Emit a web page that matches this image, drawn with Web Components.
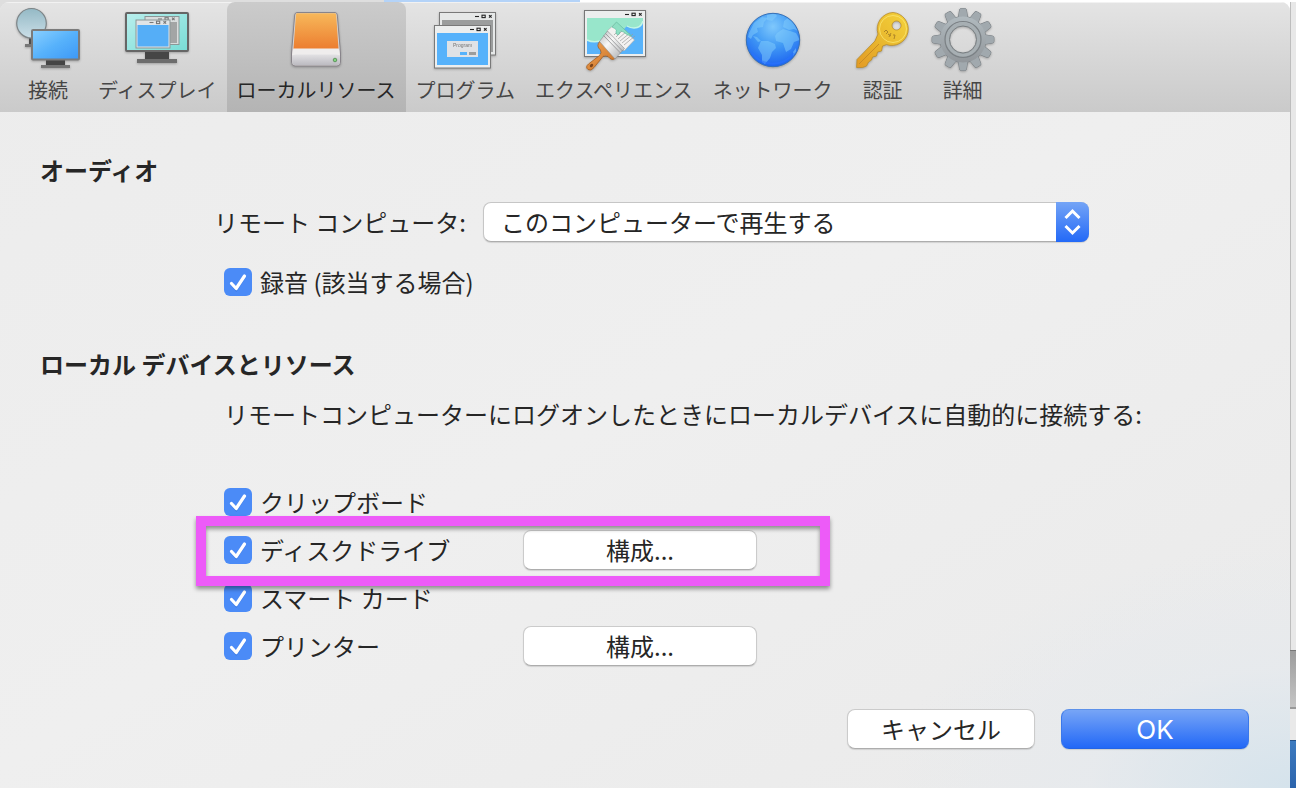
<!DOCTYPE html>
<html lang="ja">
<head>
<meta charset="utf-8">
<title>ローカルリソース</title>
<style>
body{margin:0;font-family:"Noto Sans CJK JP","Liberation Sans",sans-serif;font-size:24px;line-height:32px;color:#262626}
</style>
</head>
<body>
<desktop-view>
  <settings-window>
    <settings-toolbar slot="toolbar">
      <toolbar-item icon="connect">接続</toolbar-item>
      <toolbar-item icon="display">ディスプレイ</toolbar-item>
      <toolbar-item icon="disk" selected>ローカルリソース</toolbar-item>
      <toolbar-item icon="program">プログラム</toolbar-item>
      <toolbar-item icon="brush">エクスペリエンス</toolbar-item>
      <toolbar-item icon="globe">ネットワーク</toolbar-item>
      <toolbar-item icon="key">認証</toolbar-item>
      <toolbar-item icon="gear">詳細</toolbar-item>
    </settings-toolbar>
    <settings-section heading="オーディオ">
      <popup-field label="リモート コンピュータ:" value="このコンピューターで再生する"></popup-field>
      <check-row>録音 (該当する場合)</check-row>
    </settings-section>
    <settings-section heading="ローカル デバイスとリソース">
      <section-note>リモートコンピューターにログオンしたときにローカルデバイスに自動的に接続する:</section-note>
      <check-row>クリップボード</check-row>
      <check-row>ディスクドライブ<push-button slot="action">構成...</push-button><highlight-frame slot="mark"></highlight-frame></check-row>
      <check-row>スマート カード</check-row>
      <check-row>プリンター<push-button slot="action">構成...</push-button></check-row>
    </settings-section>
    <push-button slot="footer">キャンセル</push-button>
    <push-button slot="footer" primary>OK</push-button>
  </settings-window>
</desktop-view>

<script>
const define = (name, html, setup) => {
  const template = document.createElement('template');
  template.innerHTML = html;
  customElements.define(name, class extends HTMLElement {
    constructor() {
      super();
      this.attachShadow({ mode: 'open' }).append(template.content.cloneNode(true));
    }
    connectedCallback() { if (setup) setup(this, this.shadowRoot); }
  });
};

const winButtons = (x, y, c) => `<g fill="none" stroke="${c}" stroke-width="1.1"><path d="M${x} ${y}h4"/><rect x="${x + 7}" y="${y - 1.3}" width="3.2" height="2.4"/><path d="M${x + 14} ${y - 1.4}l2.6 2.6m0-2.6l-2.6 2.6"/></g>`;
const teeth = Array.from({ length: 12 }, (_, i) => `<path transform="rotate(${i * 30} 32 31.5)" d="M27 12L28.6 2Q28.9 .6 30.2 .6h3.6Q35.1 .6 35.4 2L37 12z"/>`).join('');

const icons = {
  connect: `
    <defs><linearGradient id="a" x2="0" y2="1"><stop stop-color="#94b9c5"/><stop offset="1" stop-color="#cbdfe8"/></linearGradient>
    <linearGradient id="b" x2="1" y2="1"><stop stop-color="#8bd0ff"/><stop offset=".5" stop-color="#57b2fb"/><stop offset="1" stop-color="#3c97f6"/></linearGradient></defs>
    <path fill="#4c4c4c" d="M13 29h4v8h-4z"/><path fill="#777" d="M9 36h8v3H9z"/>
    <circle cx="15.5" cy="15.3" r="14.8" fill="url(#a)" stroke="#7d8487" stroke-width="1.2"/>
    <path fill="#444" d="M30 52h19v6H30z"/><path fill="#747474" d="M25 57h29v3H25z"/>
    <rect x="16" y="22" width="47" height="29.5" rx="1" fill="url(#b)" stroke="#7b7b7b" stroke-width="2"/>`,
  display: `
    <defs><linearGradient id="a" x2="1" y2="1"><stop stop-color="#b9efed"/><stop offset="1" stop-color="#78dcd5"/></linearGradient></defs>
    <path fill="#464646" d="M20 43h24v9H20z"/><path fill="#6d6d6d" d="M12 51h40v4H12z"/>
    <rect x="1" y="5" width="62" height="38" rx="1" fill="url(#a)" stroke="#666" stroke-width="2"/>
    <rect x="20" y="8.5" width="34" height="28" fill="#d9dddd" stroke="#8b9797"/><path fill="#a3a5a5" d="M22 14h30v21H22z"/>${winButtons(33, 11, '#777')}
    <rect x="11" y="12" width="34" height="28" fill="#e1e4e6" stroke="#8b9797"/><path fill="#55aef7" d="M12.500 17h31v21.500h-31z"/>${winButtons(24.500, 14.500, '#777')}`,
  disk: `
    <defs><linearGradient id="a" x2="0" y2="1"><stop stop-color="#f7b85a"/><stop offset="1" stop-color="#ec7d30"/></linearGradient>
    <linearGradient id="b" x2="0" y2="1"><stop stop-color="#e2e1e4"/><stop offset="1" stop-color="#bcbbc1"/></linearGradient></defs>
    <path d="M13 4.500h38Q53 4.500 53.300 7L56.500 45v9Q56.500 58 53 58H11Q7.500 58 7.500 54v-9L10.700 7Q11 4.500 13 4.500z" fill="#d5d2d2" stroke="#88848a" stroke-width="1"/>
    <path d="M13 5.200h38q1 0 1.200 1.800L54.500 41h-45L11.900 7Q12 5.200 13 5.200z" fill="url(#a)"/>
    <path d="M9.200 40.500h45.600l1.200 7H8z" fill="#efeded"/>
    <path d="M8.200 48.500Q9 46.500 12 46.500h40q3 0 3.800 2v5.200Q55.800 57 53 57H11q-2.800 0-2.800-3.300z" fill="url(#b)"/>
    <circle cx="51" cy="52" r="1.800" fill="#7fd67c" stroke="#50864f" stroke-width=".8"/>`,
  program: `
    <rect x="6.500" y="4.500" width="56" height="42.500" fill="#e6e8e8" stroke="#797979"/><path fill="#9b9d9d" d="M9 12h51v32H9z"/>${winButtons(42, 8.500, '#222')}
    <rect x="1.500" y="17.500" width="56" height="42.500" fill="#eceeee" stroke="#797979"/><path fill="#56b2fb" d="M4 25h51v32H4z"/>${winButtons(37, 21.500, '#222')}
    <path fill="#dfe2e6" d="M14 33h31v16H14z"/><text x="29.500" y="39" text-anchor="middle" font-family="Liberation Sans" font-size="5" fill="#777">Program</text>
    <path fill="#56b2fb" d="M27 44h7v3h-7z"/><path fill="#9b9d9d" d="M36 44h7v3h-7z"/>`,
  brush: `
    <defs><linearGradient id="a" x2="1" y2="1"><stop stop-color="#f1a659"/><stop offset="1" stop-color="#c96f22"/></linearGradient>
    <linearGradient id="b" x2="1" y2="1"><stop stop-color="#b4b7b9"/><stop offset=".4" stop-color="#f8f8f8"/><stop offset="1" stop-color="#a4a6a8"/></linearGradient></defs>
    <rect x="2.500" y="2.500" width="61" height="46" fill="#eceeee" stroke="#777"/>${winButtons(43, 6.500, '#222')}
    <path fill="#58b3fa" d="M5 10h56v36H5z"/>
    <path fill="#98e6cb" d="M5 10h56v2q-1 8-8 8-5 0-8-2l-4 4-18 9q-9 5-18 1z"/><path d="M61 13q-2 7-9 7-4 0-7-2M5 32q6 3 13 1" fill="none" stroke="#c4f6e5" stroke-width="1.500"/>
    <path d="M18 33Q13.500 38 18.500 42q1.500 3-1 5.500L6.500 56q-3.500 3-.5 5.500 3 2 6-2L21 48.500q2.500-2 5 0 4 5 7.500 1.500z" fill="url(#a)" stroke="#a45d20" stroke-width=".8"/>
    <ellipse cx="9.500" cy="57.500" rx="1.400" ry="2" transform="rotate(40 9.500 57.500)" fill="#7d431a"/>
    <path d="M25 23L34.500 14.500 52.500 32 42 43z" fill="#f3f2f1" stroke="#aaa" stroke-width=".6"/>
    <path d="M32 27l6-6m-4 8l8-8m-6 10l9-8m-7 10l10-8m-8 10l11-9m-9 11l11-9" stroke="#9b9b9b" stroke-width=".7"/>
    <path d="M30 19l4.500-5 15 14q-5-1-8-4-3-2-4 0 0 4-3 2-1-2 0-4-2-2-4.500-3z" fill="#8edfc3" stroke="#61bea0" stroke-width=".7"/>
    <path d="M17.500 33.500L25.500 23 42.500 40.500 33 51z" fill="url(#b)" stroke="#8b8d8f" stroke-width=".6"/><path d="M23.500 25.500l17 17.500M21.500 27.500l17 17.500" stroke="#8b8d8f" stroke-width=".8"/>`,
  globe: `
    <defs><radialGradient id="a" cx=".5" cy=".25" r=".8"><stop stop-color="#7fc8fc"/><stop offset=".45" stop-color="#439cf5"/><stop offset="1" stop-color="#175cf0"/></radialGradient>
    <clipPath id="c"><circle cx="32" cy="32" r="26"/></clipPath></defs>
    <circle cx="32" cy="32" r="26.700" fill="url(#a)" stroke="#356fb6" stroke-width="1"/>
    <g clip-path="url(#c)" fill="#83cdfb" fill-opacity=".5">
      <path d="M8 25l5-10 8-6 6 1-4 4-1 5-6 1 1 4-5 3-2 4-3-2z"/><path d="M26 7l8-2 2 3-5 5-5-1z"/>
      <path d="M20 33l7 0 7 3 1 4-4 4-2 6-5 6-3-2 0-7-4-7z"/>
      <path d="M36 25l6-4 7 2 6 2 4 7-6 2-3 7-5 3-3-9-7-2-1-5z"/>
      <path d="M43 13l5-4 7 8 4 7-6-3-5 1-6-3z"/><path d="M12 28l4 1 4 4-3 1z"/><path d="M52 44l3-4 0 4-3 4z"/>
    </g>
    <path d="M11 45a26 26 0 0 0 42 0" fill="none" stroke="#2a73ff" stroke-width="2" opacity=".6"/>`,
  key: `
    <defs><linearGradient id="a" x1="1" x2="0" y2="1"><stop stop-color="#f5d33b"/><stop offset=".5" stop-color="#e9b92f"/><stop offset="1" stop-color="#e39a25"/></linearGradient></defs>
    <path fill-rule="evenodd" fill="url(#a)" stroke="#b98c2a" stroke-width=".8" d="M42 4.500A16.500 16.500 0 1 1 35.500 36.600l-4 1.400-1 5-4 1-1 4-4 1-1 3-3 2-2 4-4 1.500H5.600L6 51.500 24 33l3-7A16.500 16.500 0 0 1 42 4.500zM45.500 13a4.500 4.500 0 1 0 .1 0z"/>
    <circle cx="42" cy="21" r="13.500" fill="none" stroke="#f8e26c" stroke-width=".9"/><path d="M8 56l20-20" stroke="#c98c24" stroke-width="1"/>
    <path d="M33 24l2-2 2 2-2 2m2 0l3 2m0-3l-2 4m4-2l2 0-1 4" fill="none" stroke="#ad8428" stroke-width="1"/>`,
  gear: `
    <defs><linearGradient id="a" gradientUnits="userSpaceOnUse" x1="0" y1="0" x2="0" y2="63"><stop stop-color="#b6c0c5"/><stop offset="1" stop-color="#8c9094"/></linearGradient>
    <mask id="m"><path fill="#fff" d="M0 0h64v64H0z"/><circle cx="32" cy="31.500" r="13.500" fill="#000"/></mask></defs>
    <g mask="url(#m)"><g fill="#777d81" stroke="#777d81" stroke-width="1">${teeth}<circle cx="32" cy="31.500" r="23"/></g><g fill="#a1a9ae">${teeth}<circle cx="32" cy="31.500" r="23" fill="url(#a)"/></g></g>
    <circle cx="32" cy="31.500" r="18" fill="none" stroke="#7b8185" stroke-width="1.200"/><circle cx="32" cy="31.500" r="15.500" fill="none" stroke="#a7afb3" stroke-width="3"/><circle cx="32" cy="31.500" r="13.500" fill="none" stroke="#777d80"/>`
};

/* The sheet in front of the edge of the windows behind it. */
define('desktop-view', `<style>
:host{display:grid;grid-template-columns:1fr 6px;min-height:100vh;box-sizing:border-box;padding-top:2px;
 background:linear-gradient(90deg,#dedede 384px,#b4d3f8 384px 580px,#fff 580px) 0 0/100% 16px no-repeat #e8e8e8}
.edge{display:flex;flex-direction:column;box-shadow:inset 1px 0 #bdbdbd;background:#e8e8e8}
.edge i{flex:0 0 auto}
.edge .gap{flex:1 1 auto}
.panel{height:56px;border-top:1px solid #777;border-bottom:2px solid #999;background:linear-gradient(#9c9c9c,#c5c5c5)}
.field{height:31px;background:#e9e9e9}.blue{height:48px;background:linear-gradient(#3c7abf,#2c64ac);border-top:1px solid #255288;box-sizing:border-box}
</style><slot></slot><div class="edge"><i class="gap"></i><i class="panel"></i><i class="field"></i><i class="blue"></i></div>`);

define('settings-window', `<style>
:host{display:flex;flex-direction:column;border-radius:9px 9px 0 0;overflow:hidden;
 background:radial-gradient(ellipse 400px 240px at 100% 100%,#d5e3ec,rgba(228,233,238,.6) 50%,transparent),linear-gradient(150deg,#ececec,#efefef 50%,#eaeaea)}
main{padding:42px 40px 39px;flex:1 1 auto}
footer{display:flex;justify-content:flex-end;gap:26px;padding:0 41px 39px}
footer ::slotted(*){width:188px}
</style><slot name="toolbar"></slot><main><slot></slot></main><footer><slot name="footer"></slot></footer>`);

define('settings-toolbar', `<style>
:host{display:block;background:linear-gradient(#e4e4e4,#cacaca);box-shadow:inset 0 1px #f2f2f2}
nav{display:flex;padding-left:8px}
</style><nav><slot></slot></nav>`);

define('toolbar-item', `<style>
:host{display:block}
button{display:flex;flex-direction:column;align-items:center;gap:4px;min-width:80px;padding:6px 10px 8px;border:0;border-radius:8px 8px 0 0;background:none;font:inherit;font-size:20px;line-height:28px;color:#464646;white-space:nowrap}
:host([selected]) button{background:linear-gradient(#cbcbcb,#b4b4b4);color:#262626}
svg{width:64px;height:64px;margin:0 -4px;overflow:visible;filter:drop-shadow(0 1px 1px rgba(0,0,0,.25))}
</style><button type="button"><svg viewBox="0 0 64 64" aria-hidden="true"></svg><span><slot></slot></span></button>`,
(el, root) => {
  root.querySelector('svg').innerHTML = icons[el.getAttribute('icon')];
  root.querySelector('button').setAttribute('aria-pressed', el.hasAttribute('selected'));
});

define('settings-section', `<style>
:host{display:block}
:host(:not(:first-of-type)){margin-top:42px}
h2{margin:0 0 16px;font-size:inherit;line-height:32px;font-weight:700}
</style><section><h2></h2><slot></slot></section>`,
(el, root) => { root.querySelector('h2').textContent = el.getAttribute('heading'); });

define('section-note', `<style>:host{display:block;padding:2px 0 48px 184px}p{margin:0}</style><p><slot></slot></p>`);

define('popup-field', `<style>
:host{display:flex;align-items:center;gap:17px;margin-bottom:16px}
label{flex:0 0 426px;text-align:right;white-space:nowrap}
.box{position:relative;flex:0 1 606px;height:40px}
select{appearance:none;width:100%;height:40px;margin:0;padding:0 48px 0 17px;border:1px solid #c6c6c6;border-bottom-color:#adadad;border-radius:8px;background:#fff;font:inherit;color:inherit;box-shadow:0 1px 1px rgba(0,0,0,.12)}
svg{position:absolute;top:0;right:0;width:33px;height:40px;border-radius:0 8px 8px 0;background:linear-gradient(#74a4f6,#2369f7);pointer-events:none}
</style><label for="choice"></label><div class="box"><select id="choice"><option></option></select>
<svg viewBox="0 0 33 40" fill="none" stroke="#fff" stroke-width="3" aria-hidden="true"><path d="M9.500 16l7-7 7 7M9.500 24l7 7 7-7"/></svg></div>`,
(el, root) => {
  root.querySelector('label').textContent = el.getAttribute('label');
  root.querySelector('option').textContent = el.getAttribute('value');
});

define('check-row', `<style>
:host{display:flex;align-items:center;position:relative;height:48px;margin-left:184px}
label{display:flex;align-items:center;gap:8px;flex:0 0 299px;white-space:nowrap}
input{appearance:none;flex:none;width:28px;height:28px;margin:0;border-radius:6px;background:#4b8bf7}
input:checked{background-image:url("data:image/svg+xml,%3Csvg xmlns='http://www.w3.org/2000/svg' viewBox='0 0 28 28'%3E%3Cpath d='M8 15.500l4.200 5L20.500 8' fill='none' stroke='%23245ec0' stroke-opacity='.35' stroke-width='3' transform='translate(0 1)'/%3E%3Cpath d='M7.500 15.500l4.700 5L20.500 8' fill='none' stroke='white' stroke-width='3.200' stroke-linecap='round' stroke-linejoin='round'/%3E%3C/svg%3E")}
::slotted(push-button){width:234px}
</style><label><input type="checkbox" checked><span><slot></slot></span></label><slot name="action"></slot><slot name="mark"></slot>`);

define('push-button', `<style>
:host{display:block}
button{display:block;width:100%;height:40px;margin:0;padding:0;border:1px solid #cbcbcb;border-bottom-color:#adadad;border-radius:8px;background:#fff;font:inherit;line-height:38px;color:inherit;box-shadow:0 1px 1px rgba(0,0,0,.12)}
:host([primary]) button{padding-top:2px;border-color:#5d91ea #3b78ea #2364e6;background:linear-gradient(#77a5f6,#2268f7);color:#fff;font-family:Inter,"Liberation Sans",sans-serif;font-size:26px;line-height:36px;font-weight:400}
</style><button type="button"><slot></slot></button>`);

/* Call-out box that lies over the row it marks. */
define('highlight-frame', `<style>
:host{position:absolute;z-index:1;top:-10px;bottom:-12px;left:-28px;width:634px;box-sizing:border-box;border:10px solid #ed5bf8;filter:drop-shadow(0 3px 2px rgba(0,0,0,.4));pointer-events:none}
</style>`);
</script>
</body>
</html>
